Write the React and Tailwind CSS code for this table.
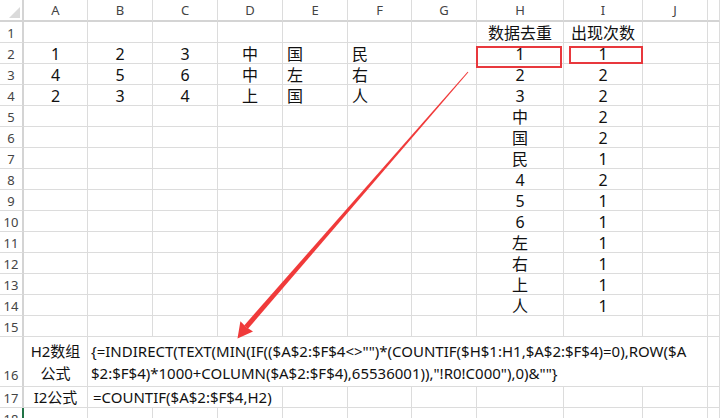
import React from "react";

const cols = ["A", "B", "C", "D", "E", "F", "G", "H", "I", "J", ""];

// rows 1-15: values for A..J
const data = {
  1: { H: "数据去重", I: "出现次数" },
  2: { A: "1", B: "2", C: "3", D: "中", E: "国", F: "民", H: "1", I: "1" },
  3: { A: "4", B: "5", C: "6", D: "中", E: "左", F: "右", H: "2", I: "2" },
  4: { A: "2", B: "3", C: "4", D: "上", E: "国", F: "人", H: "3", I: "2" },
  5: { H: "中", I: "2" },
  6: { H: "国", I: "2" },
  7: { H: "民", I: "1" },
  8: { H: "4", I: "2" },
  9: { H: "5", I: "1" },
  10: { H: "6", I: "1" },
  11: { H: "左", I: "1" },
  12: { H: "右", I: "1" },
  13: { H: "上", I: "1" },
  14: { H: "人", I: "1" },
  15: {},
};

const font = { fontFamily: "'Noto Sans', 'Noto Sans CJK SC', sans-serif" };

function RowHead({ n, tall, last }) {
  return (
    <div
      className={`flex justify-center border-r-2 border-b border-b-[#dcdcdc] text-[13px] text-[#444] leading-none ${
        tall ? "items-end pb-[4px]" : "items-center pt-[3px]"
      } ${last ? "border-r-[#217346]" : "border-r-[#d4d4d4]"}`}
    >
      {n}
    </div>
  );
}

function Cell({ children, align = "center" }) {
  const a = align === "left" ? "justify-start pl-[4px]" : "justify-center";
  return (
    <div
      className={`flex items-center pt-[2px] ${a} border-r border-b border-[#dcdcdc] text-[16px] text-[#111] leading-none whitespace-nowrap`}
    >
      {children}
    </div>
  );
}

export default function App() {
  return (
    <div className="relative w-[720px] h-[418px] overflow-hidden bg-white" style={font}>
      <div className="grid grid-cols-[24px_64px_65px_65px_65px_65px_64px_65px_87px_79px_65px_1fr] grid-rows-[22px_repeat(15,21px)_50px_21px_21px]">
        {/* corner */}
        <div className="flex items-end justify-end p-[2px] border-r-2 border-b-2 border-[#d4d4d4]">
          <svg width="11" height="11" viewBox="0 0 11 11">
            <polygon points="11,0 11,11 0,11" fill="#dadada" />
          </svg>
        </div>
        {cols.map((c, i) => (
          <div
            key={i}
            className="flex items-center justify-center border-r border-b-2 border-r-[#dcdcdc] border-b-[#d4d4d4] text-[13px] text-[#444] leading-none pt-[1px]"
          >
            {c}
          </div>
        ))}

        {Array.from({ length: 15 }, (_, k) => k + 1).map((r) => (
          <React.Fragment key={r}>
            <RowHead n={r} />
            {cols.map((c, i) => (
              <Cell key={i} align={c === "E" || c === "F" ? "left" : "center"}>
                {c ? data[r][c] : ""}
              </Cell>
            ))}
          </React.Fragment>
        ))}

        {/* row 16 */}
        <RowHead n={16} tall />
        <div className="flex flex-col items-center justify-end pb-[2px] border-r border-b border-[#dcdcdc] text-[15px] text-[#111] leading-[22px]">
          <span>H2数组</span>
          <span>公式</span>
        </div>
        <div className="col-span-9 flex items-end pl-[3px] pb-[2px] border-r border-b border-[#dcdcdc] text-[15px] text-[#111] leading-[22px] break-all">
          {'{=INDIRECT(TEXT(MIN(IF(($A$2:$F$4<>"")*(COUNTIF($H$1:H1,$A$2:$F$4)=0),ROW($A$2:$F$4)*1000+COLUMN($A$2:$F$4),65536001)),"!R0!C000"),0)&""}'}
        </div>
        <div className="border-r border-b border-[#dcdcdc]" />

        {/* row 17 */}
        <RowHead n={17} />
        <div className="flex items-center justify-center pt-[1px] border-r border-b border-[#dcdcdc] text-[15px] text-[#111] leading-none">
          I2公式
        </div>
        <div className="col-span-3 flex items-center pl-[5px] pt-[1px] border-r border-b border-[#dcdcdc] text-[15px] text-[#111] leading-none whitespace-nowrap">
          =COUNTIF($A$2:$F$4,H2)
        </div>
        {Array.from({ length: 7 }).map((_, i) => (
          <div key={i} className="border-r border-b border-[#dcdcdc]" />
        ))}

        {/* row 18 */}
        <RowHead n={18} last />
        {Array.from({ length: 11 }).map((_, i) => (
          <div key={i} className="border-r border-b border-[#dcdcdc]" />
        ))}
      </div>

      {/* selection highlights */}
      <div className="absolute left-[476px] top-[46px] w-[86px] h-[22px] border-2 border-[#e8383d]" />
      <div className="absolute left-[569px] top-[46px] w-[74px] h-[18px] border-2 border-[#e8383d]" />

      {/* arrow */}
      <svg className="absolute left-0 top-0" width="720" height="418" viewBox="0 0 720 418">
        <polygon points="468.4,72.3 467.6,71.7 244.2,325.4 248.0,328.7" fill="#f03a3a" />
        <polygon points="237.5,338.5 240.4,321.3 246.1,327.0 253.0,331.6" fill="#f03a3a" />
      </svg>
    </div>
  );
}
